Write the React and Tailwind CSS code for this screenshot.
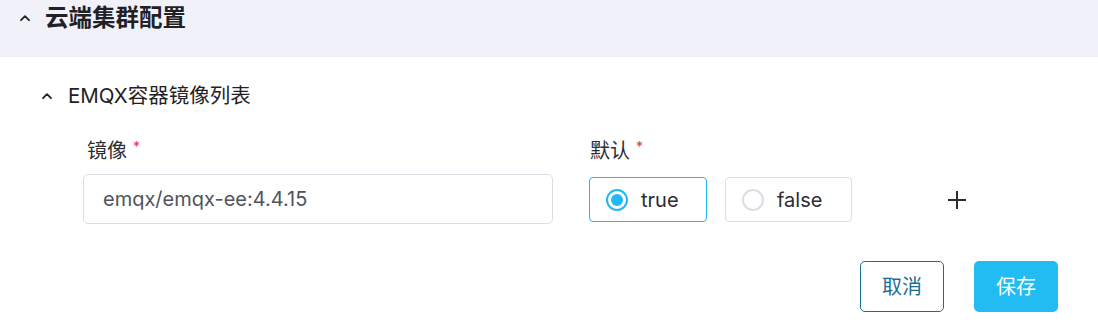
function Chevron({ className }) {
  return (
    <svg viewBox="0 0 12 8" className={className} fill="none" stroke="currentColor" strokeWidth="1.8" strokeLinecap="round" strokeLinejoin="round">
      <path d="M2 6.2 6 2.2l4 4" />
    </svg>
  );
}

function Radio({ label, checked, width }) {
  return (
    <div
      className={`flex items-center h-[45px] rounded-[4px] border bg-white pl-[16px] ${width} ${
        checked ? "border-[#22b9f0]" : "border-[#dcdde6]"
      }`}
    >
      <span
        className={`w-[22px] h-[22px] rounded-full flex items-center justify-center border-2 ${
          checked ? "border-[#22b9f0]" : "border-[#dcdde6]"
        }`}
      >
        {checked && <span className="w-[12px] h-[12px] rounded-full bg-[#22b9f0]" />}
      </span>
      <span className="ml-[13px] text-[20px] text-[#2b2d33]">{label}</span>
    </div>
  );
}

export default function App() {
  return (
    <div
      className="w-[1098px] h-[328px] bg-white overflow-hidden"
      style={{ fontFamily: 'Inter, "Noto Sans CJK SC", sans-serif' }}
    >
      <div className="h-[57px] bg-[#f1f1f9] flex items-start pt-[3px]">
        <div className="flex items-center h-[30px]">
          <Chevron className="w-[12px] h-[8px] ml-[19px] text-[#222] mt-[-1px]" />
          <span className="ml-[14px] text-[23.5px] font-bold text-[#1f2125] leading-[30px]">云端集群配置</span>
        </div>
      </div>

      <div className="flex items-center h-[28px] mt-[25px]">
        <Chevron className="w-[12px] h-[8px] ml-[41px] text-[#222]" />
        <span className="ml-[15px] text-[20.5px] text-[#1f2125]">EMQX容器镜像列表</span>
      </div>

      <div className="flex mt-[29px]">
        <div className="ml-[83px] w-[470px]">
          <div className="flex items-start h-[24px] pl-[4px] text-[20px] text-[#2b2d33] leading-[24px]">
            镜像<span className="ml-[6px] text-[#e0344a] text-[14px] leading-[16px]">*</span>
          </div>
          <div className="mt-[11px] h-[50px] rounded-[5px] border border-[#dcdde6] flex items-center pl-[19px] text-[20px] text-[#50535c]">
            emqx/emqx-ee:4.4.15
          </div>
        </div>

        <div className="ml-[36px]">
          <div className="flex items-start h-[24px] pl-[1px] text-[20px] text-[#2b2d33] leading-[24px]">
            默认<span className="ml-[6px] text-[#e0344a] text-[14px] leading-[16px]">*</span>
          </div>
          <div className="mt-[14px] flex items-center">
            <Radio label="true" checked width="w-[118px]" />
            <div className="ml-[18px]">
              <Radio label="false" width="w-[127px]" />
            </div>
            <svg viewBox="0 0 20 20" className="w-[20px] h-[20px] ml-[95px]" stroke="#2b2d33" strokeWidth="2">
              <path d="M10 1v18M1 10h18" />
            </svg>
          </div>
        </div>
      </div>

      <div className="flex justify-end mt-[37px] pr-[40px] gap-[30px]">
        <button className="w-[84px] h-[51px] rounded-[5px] border border-[#1a6d93] text-[#1a6d93] text-[20px] bg-white">
          取消
        </button>
        <button className="w-[84px] h-[51px] rounded-[5px] bg-[#22bcf3] text-white text-[20px]">
          保存
        </button>
      </div>
    </div>
  );
}
